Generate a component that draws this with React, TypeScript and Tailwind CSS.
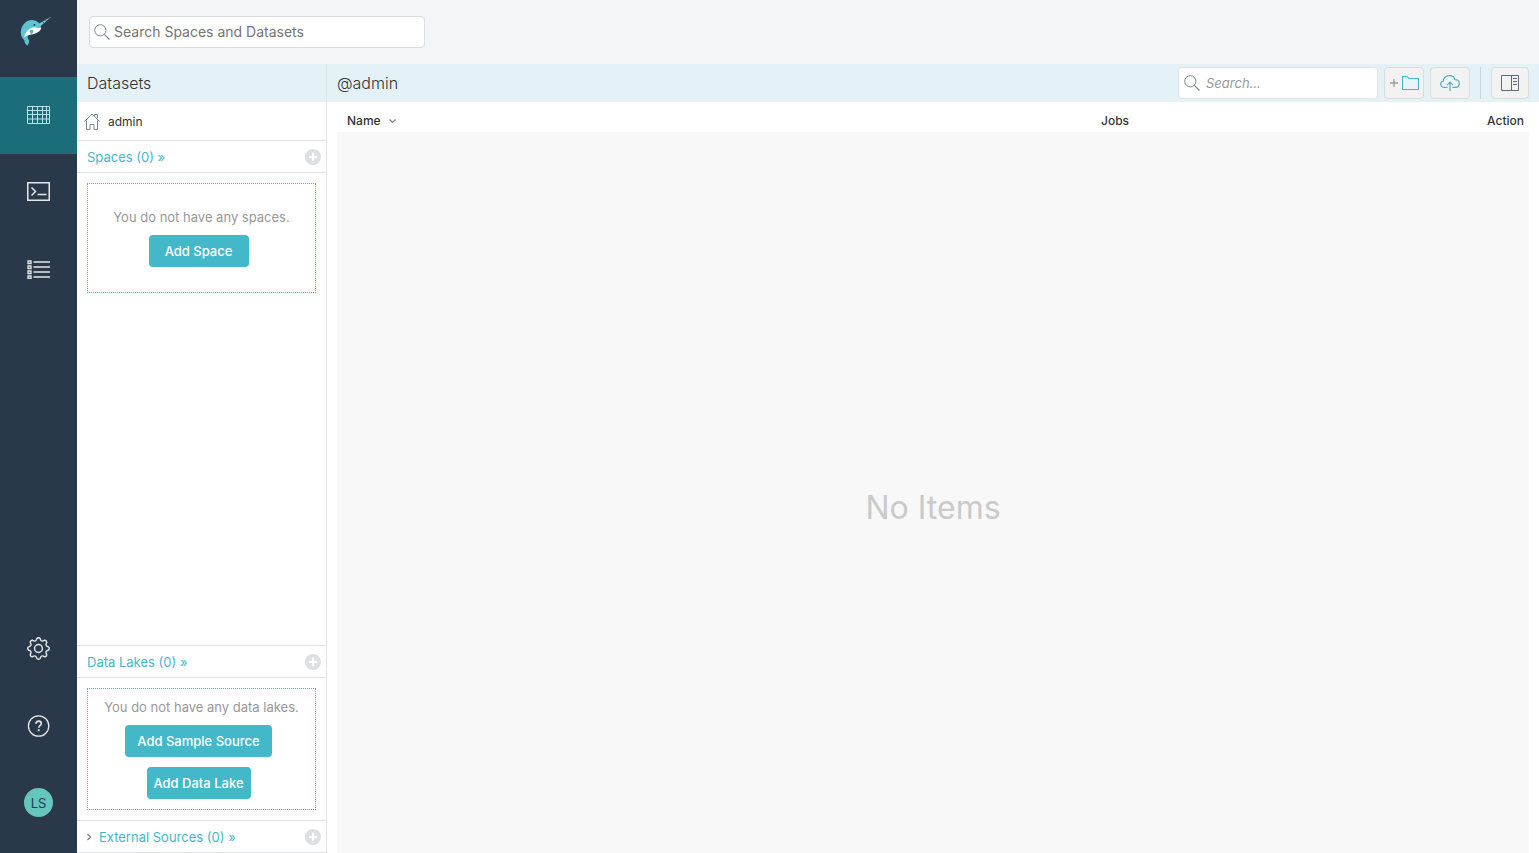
import { useState } from 'react';
import type { ReactNode } from 'react';
import { clsx } from 'clsx';
import { BsGear } from 'react-icons/bs';

function NarwhalLogo() {
    return (
        <svg width="34" height="34" viewBox="0 0 34 34" fill="none" aria-hidden="true">
            <path d="M32.500 2.400 19.800 9.800l1.600 2.400z" fill="#6fcbd8" />
            <path d="m29.500 4.600.5.9M26.800 6.200l.7 1.100M24 7.800l.9 1.400" stroke="#2a394a" strokeWidth=".6" />
            <path d="M22.200 14.200C22 9.800 18 6 13 6 6.500 6.200 1.800 12 1.800 18.600c0 3.400 1.400 5.800 3.600 7.600-.2 2 1.100 4 3.300 5.600.1-1.700 1.700-2.900 1.500-4.800-.1-1.400-1.400-2.100-1.500-3.400-.1-1.500.5-2.400 1.800-3.200z" fill="#5bc3d2" />
            <path d="M22.300 13.700c-1.900.6-3.900.5-5.600-.3-2.200-.3-5.300.7-7.500 2.600-2.200 1.900-3.600 4.300-4 7.200 1.900-1.400 4.400-2.300 7.100-2.700 4.600-.8 9.300-2.900 10-6.800z" fill="#fff" />
            <path d="M10.400 17.200c1.100-1.600 3.200-1.800 3.800-.7.6 1.300-.6 3.200-2.500 4.200.2-1.300-.2-2.500-1.300-3.500z" fill="#43b8c9" />
            <circle cx="15.400" cy="10.900" r=".9" fill="#1d3244" />
        </svg>
    );
}

function GridIcon() {
    return (
        <svg width="23" height="19" viewBox="0 0 23 19" fill="none" stroke="#b5e6ee" aria-hidden="true">
            <path d="M.5.5h22v17H.5zM.5 4.500h22M.5 8.500h22M.5 13h22M5.500.5v17M10.500.5v17M15.500.5v17M19.500.5v17" />
        </svg>
    );
}

function TerminalIcon() {
    return (
        <svg width="23" height="21" viewBox="0 0 23 21" fill="none" stroke="#e6e8ea" strokeWidth="1.500" aria-hidden="true">
            <path d="M.75.75h21.500v17.500H.75z" />
            <path d="m4.500 5.500 4 4-4 4M10.500 12.600h9" />
        </svg>
    );
}

function JobsIcon() {
    return (
        <svg width="23" height="19" viewBox="0 0 23 19" fill="none" stroke="#e6e8ea" aria-hidden="true">
            <path d="M1 1h3v2.500H1zM1 6h3v2.500H1zM1 11h3v2.500H1zM1 16h3v2.300H1z" strokeWidth="1.300" />
            <path d="M6.500 2h16.500M6.500 7h16.500M6.500 12h16.500M6.500 17h16.500" strokeWidth="1.500" />
        </svg>
    );
}

function HelpIcon() {
    return (
        <svg width="23" height="23" viewBox="-1 -1 23 23" fill="none" stroke="#e6e8ea" aria-hidden="true">
            <circle cx="10.600" cy="11" r="10.200" strokeWidth="1.300" />
            <path d="M8 8.800c0-1.700 1.100-2.700 2.700-2.700s2.600 1 2.600 2.400c0 2-2.600 2.200-2.600 4.300" strokeWidth="1.600" />
            <path d="M10.700 14.300v1.900" strokeWidth="1.900" />
        </svg>
    );
}

function SearchIcon() {
    return (
        <svg width="16" height="16" viewBox="0 0 16 16" fill="none" stroke="#7c8694" aria-hidden="true">
            <circle cx="6.300" cy="6.300" r="5.600" />
            <path d="m10.300 10.300 5.200 5.200" strokeWidth="1.200" />
        </svg>
    );
}

function HomeIcon() {
    return (
        <svg width="16" height="17" viewBox="0 0 16 17" fill="none" stroke="#7c8694" aria-hidden="true">
            <path d="M.5 8.600 8 1l7.500 7.600M2.500 7.500v9h3.500v-5h4v5h3.500v-9M10.500 2.800V1.500h3v4" />
        </svg>
    );
}

function FolderIcon() {
    return (
        <svg width="17" height="14" viewBox="0 0 17 14" fill="none" stroke="#43b8c9" strokeWidth="1.100" aria-hidden="true">
            <path d="M.5 13.500V.5h4.700l1.600 2h9.700v11z" fill="#e8f3f7" />
        </svg>
    );
}

function UploadIcon() {
    return (
        <svg width="20" height="16" viewBox="0 0 20 16" fill="none" stroke="#4fb1bf" strokeWidth="1.200" aria-hidden="true">
            <path d="M7.500 12.400H4.200C2.200 12.400.7 11 .7 9.200c0-1.600 1-2.800 2.600-3.100C3.300 3 6 .7 9.300.7c2.800 0 5 1.500 5.700 3.900 2.500 0 4.300 1.600 4.300 3.900s-1.600 3.900-3.900 3.900h-2.900" />
            <path d="M10 16V7.700M7 10.200l3-3 3 3" />
        </svg>
    );
}

function PanelIcon() {
    return (
        <svg width="18" height="16" viewBox="0 0 18 16" fill="none" stroke="#5d6b7c" aria-hidden="true">
            <path d="M.5.500h17v15H.5zM10.500.5v15M12 3.500h4M12 6.500h4M12 9.500h4" />
        </svg>
    );
}

function NavLink({ label, active, children }: { label: string, active?: boolean, children: ReactNode }) {
    return (
        <a
            href="#"
            aria-label={label}
            className={clsx('flex h-[77px] items-center justify-center', active ? 'bg-[#1b6d79]' : 'hover:bg-[#34465a]')}
        >
            {children}
        </a>
    );
}

function SectionHeader({ title, collapsed }: { title: string, collapsed?: boolean }) {
    return (
        <div className="flex h-[33px] shrink-0 items-center border-y border-[#e1e3e5] pr-[5px] pl-[10px]">
            {collapsed && (
                <svg width="4" height="6" viewBox="0 0 4 6" fill="none" stroke="#77818d" className="mr-2 overflow-visible" aria-hidden="true">
                    <path d="m.5 0 3 3-3 3" strokeWidth="1.200" />
                </svg>
            )}
            <a href="#" className="pt-px text-[13px] leading-[22px] text-[#43b8c9]">{title} »</a>
            <button type="button" aria-label={`Add to ${title}`} className="ml-auto">
                <svg width="16" height="16" viewBox="0 0 16 16" aria-hidden="true">
                    <circle cx="8" cy="8" r="8" fill="#dce0e3" />
                    <path d="M8 3.800v8.400M3.800 8h8.400" stroke="#fff" strokeWidth="2.200" />
                </svg>
            </button>
        </div>
    );
}

function PrimaryButton({ className, children }: { className: string, children: ReactNode }) {
    return (
        <button type="button" className={clsx('mr-[6px] h-8 rounded bg-[#43b8c9] text-[13px] leading-[22px] font-medium text-white', className)}>
            {children}
        </button>
    );
}

function ToolButton({ label, className, children }: { label: string, className: string, children: ReactNode }) {
    return (
        <button type="button" aria-label={label} className={clsx('flex h-8 items-center justify-center rounded border border-[#d9dbdd] bg-[#f2f2f2]', className)}>
            {children}
        </button>
    );
}

export default function App() {
    const [query, setQuery] = useState('');
    const [filter, setFilter] = useState('');

    return (
        <div className="flex h-screen bg-white font-['Inter',sans-serif] text-[#333]">
            <nav className="flex w-[77px] shrink-0 flex-col bg-[#2a394a] pb-3">
                <a href="#" aria-label="Home" className="flex h-[77px] justify-center pt-[14px] pr-[6px]"><NarwhalLogo /></a>
                <NavLink label="Datasets" active><GridIcon /></NavLink>
                <NavLink label="SQL Runner"><TerminalIcon /></NavLink>
                <NavLink label="Jobs"><JobsIcon /></NavLink>
                <div className="mt-auto">
                    <NavLink label="Settings"><BsGear size={23} color="#e6e8ea" /></NavLink>
                    <NavLink label="Help"><HelpIcon /></NavLink>
                    <NavLink label="Account">
                        <span className="flex size-[29px] items-center justify-center rounded-full bg-[#65c6bf] pt-px text-[13px] leading-5 text-[#2a394a]">LS</span>
                    </NavLink>
                </div>
            </nav>

            <div className="flex min-w-0 flex-1 flex-col">
                <header className="flex h-16 shrink-0 items-center bg-[#f4f5f7] pl-3">
                    <label className="flex h-8 w-[336px] items-center gap-1 rounded border border-[#d9dcdf] bg-white px-1">
                        <SearchIcon />
                        <input
                            type="text"
                            aria-label="Search Spaces and Datasets"
                            placeholder="Search Spaces and Datasets"
                            value={query}
                            onChange={(e) => setQuery(e.target.value)}
                            className="min-w-0 flex-1 text-sm outline-none placeholder:text-[#757575]"
                        />
                    </label>
                </header>

                <div className="flex min-h-0 flex-1">
                    <aside className="flex w-[250px] shrink-0 flex-col border-r border-[#e1e3e5]">
                        <h2 className="flex h-[38px] shrink-0 items-center bg-[#e4f1f7] pl-[10px] text-base font-light">Datasets</h2>
                        <a href="#" className="flex h-[38px] shrink-0 items-center gap-2 pl-[7px] text-xs">
                            <HomeIcon />
                            <span className="pt-px">admin</span>
                        </a>

                        <section className="flex min-h-0 flex-1 flex-col">
                            <SectionHeader title="Spaces (0)" />
                            <div className="p-[10px]">
                                <div className="flex h-[110px] flex-col items-center border border-dotted border-[#43b8c9] pt-[22px] text-[13px] leading-[22px] text-[#999]">
                                    <p className="mb-[7px]">You do not have any spaces.</p>
                                    <PrimaryButton className="w-[100px]">Add Space</PrimaryButton>
                                </div>
                            </div>
                        </section>

                        <section>
                            <SectionHeader title="Data Lakes (0)" />
                            <div className="p-[10px]">
                                <div className="flex h-[122px] flex-col items-center border border-dotted border-[#43b8c9] pt-[7px] text-[13px] leading-[22px] text-[#999]">
                                    <p className="mb-[7px]">You do not have any data lakes.</p>
                                    <PrimaryButton className="mb-[10px] w-[147px]">Add Sample Source</PrimaryButton>
                                    <PrimaryButton className="w-[104px]">Add Data Lake</PrimaryButton>
                                </div>
                            </div>
                        </section>

                        <SectionHeader title="External Sources (0)" collapsed />
                    </aside>

                    <main className="flex min-w-0 flex-1 flex-col">
                        <div className="flex h-[38px] shrink-0 items-center bg-[#e4f1f7] px-[10px]">
                            <h1 className="flex-1 text-base font-light">@admin</h1>
                            <label className="mr-[6px] flex h-8 w-[200px] items-center gap-[6px] rounded border border-[#e1e3e5] bg-white px-[5px]">
                                <SearchIcon />
                                <input
                                    type="text"
                                    aria-label="Search"
                                    placeholder="Search..."
                                    value={filter}
                                    onChange={(e) => setFilter(e.target.value)}
                                    className="min-w-0 flex-1 text-[13px] leading-[22px] outline-none placeholder:text-[#999] placeholder:italic"
                                />
                            </label>
                            <ToolButton label="New folder" className="mr-[6px] w-10 gap-1">
                                <svg width="8" height="8" viewBox="0 0 8 8" stroke="#9aa0a8" strokeWidth="1.300" aria-hidden="true">
                                    <path d="M4 0v8M0 4h8" />
                                </svg>
                                <FolderIcon />
                            </ToolButton>
                            <ToolButton label="Upload file" className="w-10"><UploadIcon /></ToolButton>
                            <div className="mx-[10px] h-8 w-px bg-[#cbd5dc]" />
                            <ToolButton label="Toggle details panel" className="w-[38px]"><PanelIcon /></ToolButton>
                        </div>

                        <div className="flex min-h-0 flex-1 flex-col px-[10px]">
                            <table className="w-full table-fixed text-left text-xs">
                                <thead>
                                    <tr className="h-[30px]">
                                        <th scope="col" className="pt-[7px] pl-[10px] font-medium">
                                            <button type="button" className="flex items-center gap-2">
                                                Name
                                                <svg width="7" height="4" viewBox="0 0 7 4" fill="none" stroke="#77818d" className="overflow-visible" aria-hidden="true">
                                                    <path d="m.5.500 3 3 3-3" strokeWidth="1.200" />
                                                </svg>
                                            </button>
                                        </th>
                                        <th scope="col" className="w-[348px] pt-[7px] font-medium">Jobs</th>
                                        <th scope="col" className="w-20 pt-[7px] pr-[5px] text-right font-medium">Action</th>
                                    </tr>
                                </thead>
                            </table>
                            <div className="flex flex-1 items-center justify-center bg-[#f8f8f8] pt-[30px] text-[32px] text-[#cacaca]">
                                No Items
                            </div>
                        </div>
                    </main>
                </div>
            </div>
        </div>
    );
}
